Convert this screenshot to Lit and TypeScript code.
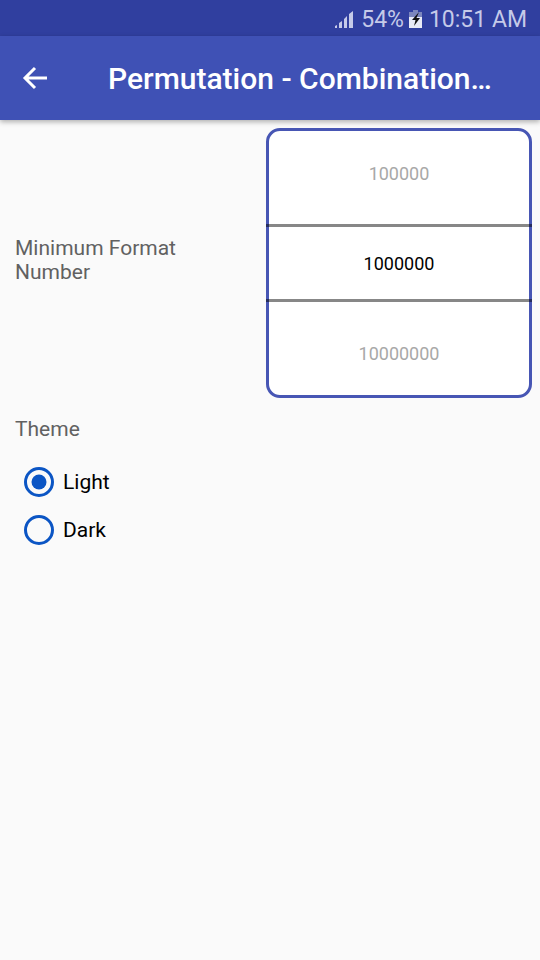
import { LitElement, html, css } from "lit";
import { customElement } from "lit/decorators.js";

@customElement("app-root")
export class AppRoot extends LitElement {
  static styles = css`
    :host { display: block; width: 540px; height: 960px; background: #fafafa; font-family: Roboto, sans-serif; overflow: hidden; }
    .status { height: 36px; background: #303f9f; display: flex; align-items: center; justify-content: flex-end; padding: 2px 13px 0 0; color: #c5cae9; font-size: 23px; box-sizing: border-box; }
    .status svg { display: block; }
    .signal { margin-right: 8px; }
    .battery { margin: 0 7px 0 5px; }
    .appbar { height: 84px; background: #3f51b5; display: flex; align-items: center; box-shadow: 0 2px 5px rgba(0,0,0,.3); position: relative; color: #fff; }
    .back { width: 108px; padding-left: 22px; box-sizing: border-box; display: flex; }
    .title { font-size: 30px; font-weight: 500; white-space: nowrap; padding-top: 1px; }
    .row { display: flex; align-items: center; padding: 8px 8px 0 15px; }
    .label { flex: 1; font-size: 21px; line-height: 24px; color: #616161; margin-bottom: 6px; }
    .picker { width: 266px; height: 270px; box-sizing: border-box; border: 3px solid #4756b4; border-radius: 14px; background: #fff; display: flex; flex-direction: column; text-align: center; font-size: 18px; color: #a8a8a8; }
    .cell { display: flex; align-items: center; justify-content: center; }
    .c1 { height: 93px; box-sizing: border-box; padding-bottom: 8px; }
    .c2 { height: 78px; border-top: 3px solid rgba(0,0,0,.47); border-bottom: 3px solid rgba(0,0,0,.47); box-sizing: border-box; color: #000; margin: 0 -3px; }
    .c3 { flex: 1; padding-top: 10px; }
    .theme { font-size: 21px; color: #616161; padding: 19px 15px 0; line-height: 24px; }
    .radios { padding: 26px 0 0 24px; display: flex; flex-direction: column; gap: 18px; }
    .radio { display: flex; align-items: center; gap: 9px; font-size: 21px; color: #000; height: 30px; }
  `;
  render() {
    return html`
      <div class="status">
        <svg class="signal" width="18" height="17" viewBox="0 0 18 17"><path d="M0 17v-2l2-1v3zM4 17v-5l3-2v7zM9 17V8l3-3v12zM14 17V3l4-3v17z" fill="#c5cae9"/></svg>
        <span>54%</span>
        <svg class="battery" width="13" height="18" viewBox="0 0 13 18"><path d="M4 0h5v2h4v16H0V2h4z" fill="#e8eaf6"/><path d="M4 0h5v2h4v5H0V2h4z" fill="#7c86bd"/><path d="M10 2 3 10h3.500L5 16l6-8H7.500z" fill="#111"/></svg>
        <span>10:51 AM</span>
      </div>
      <div class="appbar">
        <div class="back"><svg width="26" height="26" viewBox="0 0 26 26"><path d="M25 13H3M13 3 3 13l10 10" fill="none" stroke="#fff" stroke-width="3"/></svg></div>
        <div class="title">Permutation - Combination…</div>
      </div>
      <div class="row">
        <div class="label">Minimum Format<br>Number</div>
        <div class="picker">
          <div class="cell c1">100000</div>
          <div class="cell c2">1000000</div>
          <div class="cell c3">10000000</div>
        </div>
      </div>
      <div class="theme">Theme</div>
      <div class="radios">
        <div class="radio"><svg width="30" height="30" viewBox="0 0 30 30"><circle cx="15" cy="15" r="13.500" fill="none" stroke="#0b55c4" stroke-width="3"/><circle cx="15" cy="15" r="7.500" fill="#0b55c4"/></svg>Light</div>
        <div class="radio"><svg width="30" height="30" viewBox="0 0 30 30"><circle cx="15" cy="15" r="13.500" fill="none" stroke="#0b55c4" stroke-width="3"/></svg>Dark</div>
      </div>
    `;
  }
}
